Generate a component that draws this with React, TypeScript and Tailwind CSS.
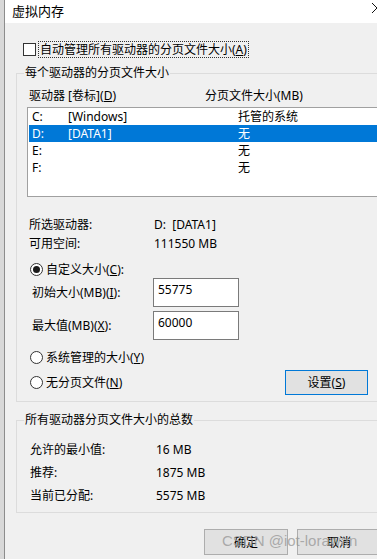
import React from "react";

const drives = [
  { letter: "C:", label: "[Windows]", size: "托管的系统", selected: false },
  { letter: "D:", label: "[DATA1]", size: "无", selected: true },
  { letter: "E:", label: "", size: "无", selected: false },
  { letter: "F:", label: "", size: "无", selected: false },
];

const totals = [
  { label: "允许的最小值:", value: "16 MB" },
  { label: "推荐:", value: "1875 MB" },
  { label: "当前已分配:", value: "5575 MB" },
];

function Radio({ checked }: { checked?: boolean }) {
  return (
    <span className="w-[13px] h-[13px] rounded-full border border-[#333] bg-white flex items-center justify-center shrink-0">
      {checked && <span className="w-[7px] h-[7px] rounded-full bg-[#1a1a1a]" />}
    </span>
  );
}

export default function App() {
  return (
    <div className="flex w-[377px] h-[559px] overflow-hidden text-[12px] leading-[17px] text-black font-['Noto_Sans','Noto_Sans_CJK_SC',sans-serif]">
      {/* window behind */}
      <div className="w-[4px] bg-[#d8d8d8] shrink-0" />
      <div className="w-px bg-[#8c8c8c] shrink-0" />

      <div className="flex-1 flex flex-col min-w-0">
        {/* Title bar */}
        <div className="h-[23px] bg-white flex items-center pl-[7px] shrink-0">
          <span className="text-[13px]">虚拟内存</span>
          <svg className="ml-auto mr-[-6px] mb-[8px]" width="12" height="12" viewBox="0 0 12 12">
            <path d="M1 1 L11 11 M11 1 L1 11" stroke="#111" strokeWidth="1" />
          </svg>
        </div>

        {/* Body */}
        <div className="flex-1 bg-[#f0f0f0] pl-[11px] relative">
          {/* Auto manage */}
          <div className="flex items-center mt-[18px] ml-[7px]">
            <span className="w-[13px] h-[13px] border border-[#333] bg-white shrink-0" />
            <span className="ml-[2px] px-px border border-dotted border-[#333] leading-[15px]">
              自动管理所有驱动器的分页文件大小(<u>A</u>)
            </span>
          </div>

          {/* Per-drive group */}
          <div className="relative mt-[15px] w-[375px] border border-[#dcdcdc] pt-[13px] pl-[10px] pb-[6px]">
            <span className="absolute left-[7px] -top-[10px] px-[1px] bg-[#f0f0f0]">每个驱动器的分页文件大小</span>

            <div className="flex pl-[2px]">
              <span className="w-[176px]">驱动器 [卷标](<u>D</u>)</span>
              <span>分页文件大小(MB)</span>
            </div>

            <div className="mt-[3px] h-[90px] border border-[#a0a0a0] bg-white pl-px">
              {drives.map((d) => (
                <div
                  key={d.letter}
                  className={`flex h-[17px] items-center pl-[3px] ${d.selected ? "bg-[#0078d7] text-white" : ""}`}
                >
                  <span className="w-[36px]">{d.letter}</span>
                  <span className="w-[170px]">{d.label}</span>
                  <span>{d.size}</span>
                </div>
              ))}
            </div>

            <div className="mt-[18px] pl-[2px] leading-[19px]">
              <div className="flex">
                <span className="w-[125px]">所选驱动器:</span>
                <span>D:&nbsp;&nbsp;[DATA1]</span>
              </div>
              <div className="flex">
                <span className="w-[125px]">可用空间:</span>
                <span>111550 MB</span>
              </div>
            </div>

            <div className="mt-[8px] flex items-center pl-[3px] gap-[3px]">
              <Radio checked />
              <span>自定义大小(<u>C</u>):</span>
            </div>

            <div className="flex items-center pl-[5px]">
              <span className="w-[121px]">初始大小(MB)(<u>I</u>):</span>
              <div className="w-[86px] h-[29px] border border-[#7a7a7a] bg-white pl-[4px] pt-[2px]">55775</div>
            </div>
            <div className="flex items-center pl-[5px] mt-[4px]">
              <span className="w-[121px]">最大值(MB)(<u>X</u>):</span>
              <div className="w-[86px] h-[29px] border border-[#7a7a7a] bg-white pl-[4px] pt-[2px]">60000</div>
            </div>

            <div className="mt-[9px] flex items-center pl-[3px] gap-[3px]">
              <Radio />
              <span>系统管理的大小(<u>Y</u>)</span>
            </div>

            <div className="mt-[4px] flex items-center h-[25px] pl-[3px]">
              <Radio />
              <span className="ml-[3px] w-[239px]">无分页文件(<u>N</u>)</span>
              <button className="w-[83px] h-[25px] bg-[#e1e1e1] border border-[#0078d7] flex items-center justify-center shrink-0">
                设置(<u>S</u>)
              </button>
            </div>
          </div>

          {/* Totals group */}
          <div className="relative mt-[18px] w-[375px] border border-[#dcdcdc] pt-[17px] pl-[13px] pb-[5px] leading-[23px]">
            <span className="absolute left-[7px] -top-[10px] px-[1px] bg-[#f0f0f0] leading-[17px]">所有驱动器分页文件大小的总数</span>
            {totals.map((t) => (
              <div key={t.label} className="flex">
                <span className="w-[126px]">{t.label}</span>
                <span>{t.value}</span>
              </div>
            ))}
          </div>

          {/* Dialog buttons */}
          <div className="mt-[16px] flex pl-[188px] gap-[9px]">
            <button className="w-[84px] h-[26px] bg-[#e1e1e1] border border-[#adadad] flex items-center justify-center shrink-0">
              确定
            </button>
            <button className="w-[84px] h-[26px] bg-[#e1e1e1] border border-[#adadad] flex items-center justify-center shrink-0">
              取消
            </button>
          </div>

          {/* watermark */}
          <span className="absolute left-[217px] top-[508px] text-[15px] leading-[20px] text-[#9a9a9a]/80 font-['Liberation_Sans',sans-serif] whitespace-nowrap pointer-events-none">
            CSDN @iot-lorawan
          </span>
        </div>
      </div>
    </div>
  );
}
